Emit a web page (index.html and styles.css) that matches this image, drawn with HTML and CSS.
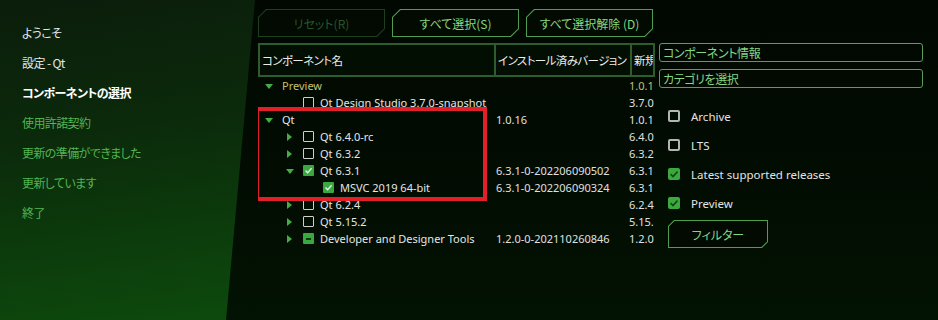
FILE: index.html
```html
<!DOCTYPE html>
<html lang="ja">
<head>
<meta charset="UTF-8" />
<title>Qt メンテナンスツール - コンポーネントの選択</title>
<link rel="stylesheet" href="styles.css">
</head>
<body>

<div class="app">
  <nav class="sidebar">
    <div class="step done">ようこそ</div>
    <div class="step done">設定 - Qt</div>
    <div class="step current">コンポーネントの選択</div>
    <div class="step">使用許諾契約</div>
    <div class="step">更新の準備ができました</div>
    <div class="step">更新しています</div>
    <div class="step">終了</div>
  </nav>

  <main class="main">
    <section class="components">
      <div class="actions">
        <button class="btn disabled"><span>リセット(R)</span></button>
        <button class="btn"><span>すべて選択(S)</span></button>
        <button class="btn"><span>すべて選択解除 (D)</span></button>
      </div>

      <div class="tree">
        <div class="tree-head">
          <div class="cell">コンポーネント名</div>
          <div class="cell">インストール済みバージョン</div>
          <div class="cell">新規</div>
        </div>

        <div class="row preview">
          <div class="name lvl0"><span class="toggle open"></span><span class="label">Preview</span></div>
          <div class="ver"></div>
          <div class="ver new">1.0.1</div>
        </div>
        <div class="row">
          <div class="name lvl1"><span class="toggle"></span><span class="check"></span><span class="label">Qt Design Studio 3.7.0-snapshot</span></div>
          <div class="ver"></div>
          <div class="ver new">3.7.0</div>
        </div>
        <div class="row">
          <div class="name lvl0"><span class="toggle open"></span><span class="label">Qt</span></div>
          <div class="ver">1.0.16</div>
          <div class="ver new">1.0.1</div>
        </div>
        <div class="row">
          <div class="name lvl1"><span class="toggle closed"></span><span class="check"></span><span class="label">Qt 6.4.0-rc</span></div>
          <div class="ver"></div>
          <div class="ver new">6.4.0</div>
        </div>
        <div class="row">
          <div class="name lvl1"><span class="toggle closed"></span><span class="check"></span><span class="label">Qt 6.3.2</span></div>
          <div class="ver"></div>
          <div class="ver new">6.3.2</div>
        </div>
        <div class="row">
          <div class="name lvl1"><span class="toggle open"></span><span class="check on"><svg viewBox="0 0 11 11"><path d="M2.5 5.6 L4.6 7.7 L8.6 3.3" /></svg></span><span class="label">Qt 6.3.1</span></div>
          <div class="ver">6.3.1-0-202206090502</div>
          <div class="ver new">6.3.1</div>
        </div>
        <div class="row">
          <div class="name lvl2"><span class="toggle"></span><span class="check on"><svg viewBox="0 0 11 11"><path d="M2.5 5.6 L4.6 7.7 L8.6 3.3" /></svg></span><span class="label">MSVC 2019 64-bit</span></div>
          <div class="ver">6.3.1-0-202206090324</div>
          <div class="ver new">6.3.1</div>
        </div>
        <div class="row">
          <div class="name lvl1"><span class="toggle closed"></span><span class="check"></span><span class="label">Qt 6.2.4</span></div>
          <div class="ver"></div>
          <div class="ver new">6.2.4</div>
        </div>
        <div class="row">
          <div class="name lvl1"><span class="toggle closed"></span><span class="check"></span><span class="label">Qt 5.15.2</span></div>
          <div class="ver"></div>
          <div class="ver new">5.15.</div>
        </div>
        <div class="row">
          <div class="name lvl1"><span class="toggle closed"></span><span class="check part"></span><span class="label">Developer and Designer Tools</span></div>
          <div class="ver">1.2.0-0-202110260846</div>
          <div class="ver new">1.2.0</div>
        </div>

        <!-- annotation box drawn over the tree -->
        <div class="highlight"></div>
      </div>
    </section>

    <aside class="filters">
      <div class="info-box">コンポーネント情報</div>
      <div class="info-box">カテゴリを選択</div>

      <div class="options">
        <label class="option"><span class="box"></span>Archive</label>
        <label class="option"><span class="box"></span>LTS</label>
        <label class="option"><span class="box on"><svg viewBox="0 0 12 12"><path d="M2.6 6.2 L5 8.5 L9.5 3.6" /></svg></span>Latest supported releases</label>
        <label class="option"><span class="box on"><svg viewBox="0 0 12 12"><path d="M2.6 6.2 L5 8.5 L9.5 3.6" /></svg></span>Preview</label>
      </div>

      <button class="btn filter"><span>フィルター</span></button>
    </aside>
  </main>
</div>

</body>
</html>
```

FILE: styles.css
```css
/* Reset */
* {
  margin: 0; padding: 0; box-sizing: border-box;
}
body {
  width: 938px;
  height: 320px;
  overflow: hidden;
  background: linear-gradient(180deg, #010701 0%, #020d02 60%, #021302 100%);
  color: #e4e4e4;
  font-family: "Noto Sans", "Noto Sans CJK JP", sans-serif;
  font-size: 11px;
  font-feature-settings: "palt";
}
.app {
  display: grid;
  grid-template-columns: 258px 1fr;
  height: 320px;
}

/* Sidebar */
.sidebar {
  background: linear-gradient(172deg, #0b1d0b 0%, #0b2a0b 40%, #0c3d0c 75%, #0d4a0d 100%);
  clip-path: polygon(0 0, 255px 0, 226px 100%, 0 100%);
  padding: 18px 0 0 22px;
}
.step {
  height: 30px;
  line-height: 30px;
  font-size: 12px;
  letter-spacing: -0.6px;
  color: #52b552;
  font-family: "Noto Sans CJK JP", sans-serif;
}
.step.done {
  color: #e6e6e6;
}
.step.current {
  color: #ffffff;
  font-weight: bold;
}

/* Main */
.main {
  display: flex;
  gap: 4px;
}
.components {
  width: 397px;
}
.actions {
  display: flex;
  gap: 7px;
  padding-top: 9px;
}
.btn {
  position: relative;
  width: 127px;
  height: 28px;
  border: none;
  background: #4f9d4f;
  clip-path: polygon(8px 0, 100% 0, 100% calc(100% - 8px), calc(100% - 8px) 100%, 0 100%, 0 8px);
  color: #84d884;
  font-family: "Noto Sans CJK JP", sans-serif;
  font-size: 12px;
  font-feature-settings: "palt";
  cursor: pointer;
}
.btn::before {
  content: "";
  position: absolute;
  inset: 1px;
  background: #020a02;
  clip-path: polygon(7.6px 0, 100% 0, 100% calc(100% - 7.6px), calc(100% - 7.6px) 100%, 0 100%, 0 7.6px);
}
.btn span {
  position: relative;
}
.btn.disabled {
  background: #1d3f1d;
  color: #2c552c;
}

/* Component tree */
.tree {
  position: relative;
  margin-top: 6px;
  overflow: hidden;
  height: 260px;
}
.tree-head {
  display: grid;
  grid-template-columns: 234px 136px 1fr;
  height: 34px;
  border: 2px solid #2f5c2f;
  background: #030e03;
}
.tree-head .cell {
  display: flex;
  align-items: center;
  padding-left: 2px;
  color: #ececec;
  font-family: "Noto Sans CJK JP", sans-serif;
  font-size: 11.5px;
  letter-spacing: -0.6px;
  white-space: nowrap;
  overflow: hidden;
}
.tree-head .cell + .cell {
  border-left: 2px solid #2f5c2f;
}
.row {
  display: grid;
  grid-template-columns: 234px 136px 1fr;
  height: 17px;
  align-items: center;
  white-space: nowrap;
}
.name {
  display: flex;
  align-items: center;
  overflow: hidden;
}
.lvl0 { padding-left: 7px; }
.lvl1 { padding-left: 28px; }
.lvl2 { padding-left: 48px; }
.toggle {
  width: 17px;
  height: 8px;
  flex: none;
  position: relative;
}
.toggle.open::after {
  content: "";
  position: absolute;
  left: 0;
  top: 2px;
  border-left: 4px solid transparent;
  border-right: 4px solid transparent;
  border-top: 5px solid #45ad45;
}
.toggle.closed::after {
  content: "";
  position: absolute;
  left: 1px;
  top: 0;
  border-top: 4px solid transparent;
  border-bottom: 4px solid transparent;
  border-left: 5px solid #45ad45;
}
.check {
  width: 11px;
  height: 11px;
  flex: none;
  margin-right: 6px;
  border: 1.5px solid #cfcfcf;
  border-radius: 1px;
  position: relative;
}
.check.on,
.check.part {
  border: none;
  background: #3aa841;
}
.check svg {
  display: block;
  width: 11px;
  height: 11px;
  fill: none;
  stroke: #dff5df;
  stroke-width: 1.4;
}
.check.part::after {
  content: "";
  position: absolute;
  left: 3px;
  right: 3px;
  top: 5px;
  height: 1.5px;
  background: #0e3a0e;
}
.label {
  color: #e6e6e6;
}
.ver {
  padding-left: 4px;
  color: #e0e0e0;
}
.ver.new {
  padding-left: 1px;
}
.preview .label,
.preview .ver {
  color: #c4c071;
}
.highlight {
  position: absolute;
  left: -3px;
  top: 64px;
  width: 232px;
  height: 94px;
  border: 4px solid #e2202a;
}

/* Right panel */
.filters {
  width: 264px;
  padding-top: 43px;
  display: flex;
  flex-direction: column;
}
.info-box {
  height: 19px;
  border: 1px solid #5a9e5a;
  border-radius: 3px;
  padding-left: 3px;
  line-height: 17px;
  color: #86d486;
  font-family: "Noto Sans CJK JP", sans-serif;
  font-size: 12px;
  letter-spacing: -0.4px;
  margin-bottom: 7px;
}
.options {
  display: flex;
  flex-direction: column;
  gap: 17px;
  padding: 15px 0 0 9px;
}
.option {
  display: flex;
  align-items: center;
  height: 12px;
  color: #e4e4e4;
  font-size: 11.5px;
}
.box {
  width: 12px;
  height: 12px;
  margin-right: 11px;
  border: 2px solid #b4b4b4;
  border-radius: 2px;
}
.box.on {
  border: none;
  background: #3da83d;
}
.box svg {
  display: block;
  width: 12px;
  height: 12px;
  fill: none;
  stroke: #0f4a14;
  stroke-width: 1.6;
}
.btn.filter {
  width: 100px;
  height: 28px;
  margin: 11px 0 0 9px;
  clip-path: polygon(6px 0, 100% 0, 100% calc(100% - 6px), calc(100% - 6px) 100%, 0 100%, 0 6px);
}
.btn.filter::before {
  clip-path: polygon(5.6px 0, 100% 0, 100% calc(100% - 5.6px), calc(100% - 5.6px) 100%, 0 100%, 0 5.6px);
}
```
